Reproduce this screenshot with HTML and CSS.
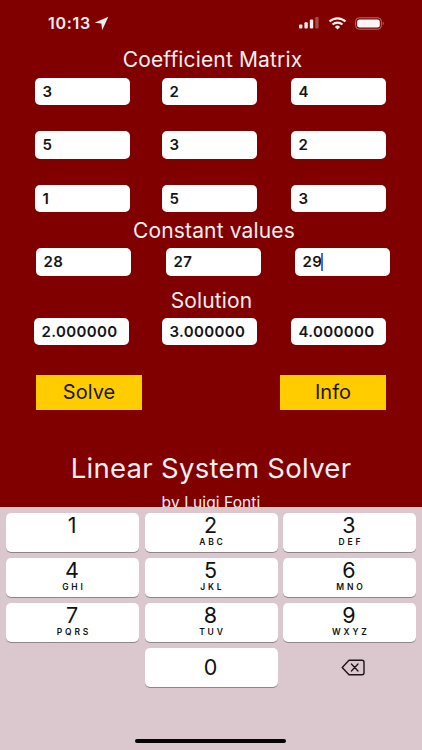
FILE: index.html
```html
<!DOCTYPE html>
<html lang="en">
<head>
<meta charset="utf-8">
<title>Linear System Solver</title>
<link rel="stylesheet" href="styles.css">
</head>
<body>
<div class="phone">
  <main class="app">
    <div class="status">
      <div class="time">10:13
        <svg class="loc" viewBox="0 0 14 14" width="15" height="15"><path d="M13.4 0.6 L0.6 6.4 L6.9 7.1 L7.6 13.4 Z" fill="#f6eeee"/></svg>
      </div>
      <div class="status-icons">
        <svg width="21" height="12" viewBox="0 0 21 12"><rect x="0" y="7.5" width="3.4" height="4" rx="1" fill="#f6eeee"/><rect x="5.4" y="5.2" width="3.4" height="6.3" rx="1" fill="#f6eeee"/><rect x="10.8" y="2.6" width="3.4" height="8.9" rx="1" fill="#f6eeee"/><rect x="16.2" y="0" width="3.4" height="11.5" rx="1" fill="#a44c4c"/></svg>
        <svg width="19" height="13" viewBox="0 0 18 13"><path d="M1 4.6 A11.5 11.5 0 0 1 17 4.6" fill="none" stroke="#f6eeee" stroke-width="2.1"/><path d="M4 7.6 A7.2 7.2 0 0 1 14 7.6" fill="none" stroke="#f6eeee" stroke-width="2.1"/><path d="M6.4 9.9 A3.6 3.6 0 0 1 11.6 9.9 L9 12.6 Z" fill="#f6eeee"/></svg>
        <svg width="30" height="13" viewBox="0 0 30 13"><rect x="0.6" y="0.8" width="25.8" height="11.4" rx="3.6" fill="none" stroke="#b57272" stroke-width="1"/><rect x="2.2" y="2.4" width="22.6" height="8.2" rx="2.4" fill="#fbf6f6"/><path d="M27.8 4.6 C29 5 29 8 27.8 8.4 Z" fill="#b57272"/></svg>
      </div>
    </div>

    <h2 class="heading heading-first">Coefficient Matrix</h2>
    <div class="fields fields-matrix">
      <div class="field">3</div><div class="field">2</div><div class="field">4</div>
    </div>
    <div class="fields fields-matrix">
      <div class="field">5</div><div class="field">3</div><div class="field">2</div>
    </div>
    <div class="fields fields-matrix">
      <div class="field">1</div><div class="field">5</div><div class="field">3</div>
    </div>

    <h2 class="heading heading-constant">Constant values</h2>
    <div class="fields fields-constant">
      <div class="field">28</div><div class="field">27</div><div class="field">29<span class="caret"></span></div>
    </div>

    <h2 class="heading heading-solution">Solution</h2>
    <div class="fields fields-solution">
      <div class="field">2.000000</div><div class="field">3.000000</div><div class="field">4.000000</div>
    </div>

    <div class="actions">
      <div class="action">Solve</div>
      <div class="action">Info</div>
    </div>

    <h1 class="title">Linear System Solver</h1>
    <p class="byline">by Luigi Fonti</p>
  </main>

  <section class="keyboard">
    <div class="keys">
      <div class="key"><span class="num">1</span></div>
      <div class="key"><span class="num">2</span><span class="letters">ABC</span></div>
      <div class="key"><span class="num">3</span><span class="letters">DEF</span></div>
      <div class="key"><span class="num">4</span><span class="letters">GHI</span></div>
      <div class="key"><span class="num">5</span><span class="letters">JKL</span></div>
      <div class="key"><span class="num">6</span><span class="letters">MNO</span></div>
      <div class="key"><span class="num">7</span><span class="letters">PQRS</span></div>
      <div class="key"><span class="num">8</span><span class="letters">TUV</span></div>
      <div class="key"><span class="num">9</span><span class="letters">WXYZ</span></div>
      <div class="key key-empty"></div>
      <div class="key key-zero"><span class="num">0</span></div>
      <div class="key key-empty key-delete">
        <svg width="24" height="17" viewBox="0 0 24 17"><path d="M8 1.2 H21 Q23 1.2 23 3.2 V13.8 Q23 15.8 21 15.8 H8 L1.2 8.5 Z" fill="none" stroke="#1c1416" stroke-width="1.4" stroke-linejoin="round"/><path d="M10.4 5 L17 12 M17 5 L10.4 12" stroke="#1c1416" stroke-width="1.3" stroke-linecap="round"/></svg>
      </div>
    </div>
    <div class="home"></div>
  </section>
</div>
</body>
</html>
```
FILE: styles.css
```css
* { box-sizing: border-box; }
html, body { margin: 0; padding: 0; }
body { font-family: Inter, "Liberation Sans", sans-serif; background: #800000; }

.phone { width: 422px; height: 750px; overflow: hidden; display: flex; flex-direction: column; }
.app { height: 507px; flex: none; overflow: hidden; background: #800000; color: #f8eeee; }

.status { height: 44px; display: flex; justify-content: space-between; align-items: center; padding: 2px 0 0 48px; }
.time { display: flex; align-items: center; gap: 3px; font-size: 16px; font-weight: 600; letter-spacing: 0.7px; color: #f6eeee; width: 70px; white-space: nowrap; }
.status-icons { display: flex; align-items: center; gap: 8px; padding-right: 37px; }
.status-icons svg { display: block; }

.heading { margin: 0; font-size: 21px; line-height: 24px; font-weight: 400; letter-spacing: 0.15px; text-align: center; }
.heading-first { margin-top: 4px; margin-left: 3px; }
.heading-constant { margin-top: 7px; margin-left: 6px; }
.heading-solution { margin-top: 13px; margin-left: 1px; }

.fields { display: flex; height: 27.5px; }
.fields-matrix { padding-left: 35px; margin-top: 26px; }
.heading-first + .fields-matrix { margin-top: 5.5px; }
.fields-matrix .field:nth-child(2) { margin: 0 34px 0 32px; }
.fields-constant { padding-left: 36px; margin-top: 5px; }
.fields-constant .field:nth-child(2) { margin: 0 34px 0 35px; }
.fields-solution { padding-left: 34px; margin-top: 5px; }
.fields-solution .field:nth-child(2) { margin: 0 34px 0 33px; }

.field { flex: none; width: 95px; display: flex; align-items: center; background: #fff; border-radius: 5px; padding-left: 7.5px; color: #151515; font-size: 15px; font-weight: 600; letter-spacing: 0.35px; }
.caret { display: inline-block; width: 2px; height: 18px; margin-left: -1px; background: #3d6cf0; }

.actions { display: flex; justify-content: space-between; margin: 30px 36px 0 36px; }
.action { width: 106px; height: 34.5px; display: flex; align-items: center; justify-content: center; background: #ffcc00; color: #1d1608; font-size: 20px; }

.title { margin: 41.5px 0 0; font-size: 27.5px; line-height: 34px; font-weight: 400; letter-spacing: 0.3px; text-align: center; }
.byline { margin: 9px 0 0; font-size: 15.5px; line-height: 18px; letter-spacing: 0.1px; text-align: center; }

.keyboard { flex: 1; background: #dbc8ce; padding: 6px 6px 0; display: flex; flex-direction: column; position: relative; }
.keys { display: grid; grid-template-columns: 133px 133px 133px; column-gap: 5.5px; row-gap: 6px; grid-auto-rows: 39px; }
.key { background: #fff; border-radius: 5px; box-shadow: 0 1px 0 #8f8589; display: flex; flex-direction: column; align-items: center; color: #111; }
.key-empty { background: none; box-shadow: none; }
.key-zero, .key-delete { justify-content: center; }
.key-delete svg { display: block; margin-left: 6px; }
.num { font-size: 21.5px; line-height: 25px; font-weight: 400; margin-right: 1px; }
.letters { font-size: 8.5px; line-height: 9px; font-weight: 600; letter-spacing: 2.8px; margin-right: -2.8px; }
.home { position: absolute; left: 135px; bottom: 7px; width: 151px; height: 4px; background: #050505; border-radius: 2px; }
```
